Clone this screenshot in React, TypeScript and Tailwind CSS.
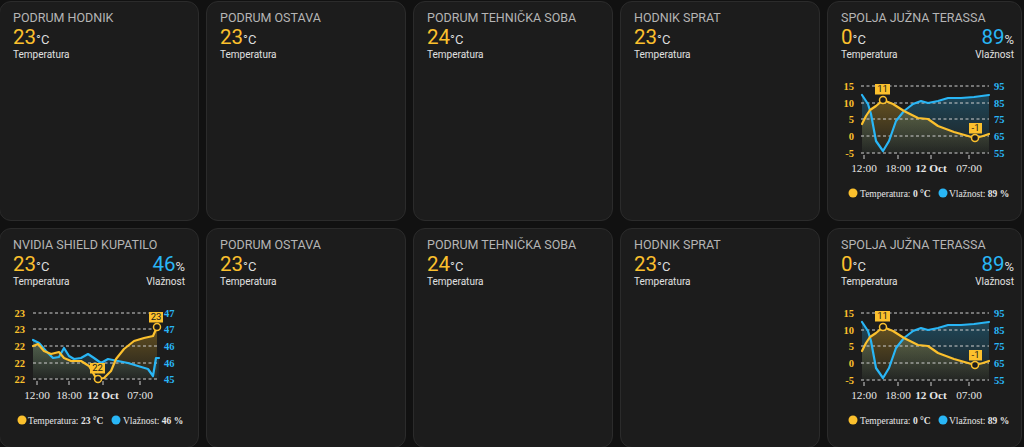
import React from "react";

type Pt = [number, number];

const YEL = "#fbc02d";
const BLU = "#29b6f6";

const line = (pts: Pt[]) => pts.map((p, i) => (i ? "L" : "M") + p[0] + " " + p[1]).join(" ");
const area = (pts: Pt[], bottom: number) =>
  line(pts) + ` L${pts[pts.length - 1][0]} ${bottom} L${pts[0][0]} ${bottom} Z`;

type Box = { x: number; y: number; w: number; text: string; mx: number; my: number };

type ChartProps = {
  id: string;
  w: number;
  gx1: number;
  gx2: number;
  gy: number[];
  leftX: number;
  rightX: number;
  left: string[];
  right: string[];
  ticks: number[];
  temp: Pt[];
  hum: Pt[];
  boxes: Box[];
  legend: { c1: number; t1: number; c2: number; t2: number; tv: string; hv: string };
};

function Chart(p: ChartProps) {
  const bottom = p.gy[p.gy.length - 1];
  const serif = "'Liberation Serif', 'Times New Roman', serif";
  return (
    <svg width={p.w} height={150} viewBox={`0 58 ${p.w} 150`} className="block">
      <defs>
        <linearGradient id={p.id + "t"} x1="0" y1="0" x2="0" y2="1">
          <stop offset="0%" stopColor={YEL} stopOpacity="0.32" />
          <stop offset="100%" stopColor={YEL} stopOpacity="0.03" />
        </linearGradient>
        <linearGradient id={p.id + "h"} x1="0" y1="0" x2="0" y2="1">
          <stop offset="0%" stopColor={BLU} stopOpacity="0.28" />
          <stop offset="100%" stopColor={BLU} stopOpacity="0.03" />
        </linearGradient>
      </defs>
      <path d={area(p.hum, bottom)} fill={`url(#${p.id}h)`} />
      <path d={area(p.temp, bottom)} fill={`url(#${p.id}t)`} />
      {p.gy.map((y, i) => (
        <line key={i} x1={p.gx1} x2={p.gx2} y1={y} y2={y} stroke="#cfcfcf" strokeWidth="1" strokeDasharray="3 2.5" />
      ))}
      {p.ticks.map((x, i) => (
        <line key={i} x1={x} x2={x} y1={bottom + 2} y2={bottom + 6} stroke="#cfcfcf" strokeWidth="1" />
      ))}
      {p.left.map((t, i) => (
        <text key={i} x={p.leftX} y={p.gy[i] + 3.5} textAnchor="end" fontFamily={serif} fontSize="10.5" fontWeight="bold" fill={YEL}>
          {t}
        </text>
      ))}
      {p.right.map((t, i) => (
        <text key={i} x={p.rightX} y={p.gy[i] + 3.5} fontFamily={serif} fontSize="10.5" fontWeight="bold" fill={BLU}>
          {t}
        </text>
      ))}
      <path d={line(p.hum)} fill="none" stroke={BLU} strokeWidth="2.2" strokeLinejoin="round" strokeLinecap="round" />
      <path d={line(p.temp)} fill="none" stroke={YEL} strokeWidth="2.2" strokeLinejoin="round" strokeLinecap="round" />
      {p.boxes.map((b, i) => (
        <g key={i}>
          <circle cx={b.mx} cy={b.my} r="3.5" fill="#1c1c1c" stroke={YEL} strokeWidth="1.5" />
          <rect x={b.x} y={b.y} width={b.w} height={10.5} fill={YEL} />
          <text x={b.x + b.w / 2} y={b.y + 8.3} textAnchor="middle" fontFamily="Roboto, 'Liberation Sans', sans-serif" fontSize="9.5" fill="#1a1a1a">
            {b.text}
          </text>
        </g>
      ))}
      {[
        ["12:00", false],
        ["18:00", false],
        ["12 Oct", true],
        ["07:00", false],
      ].map(([t, b], i) => (
        <text key={i} x={p.ticks[i]} y={170} textAnchor="middle" fontFamily={serif} fontSize="11.3" fontWeight={b ? "bold" : "normal"} fill="#e6e6e6">
          {t as string}
        </text>
      ))}
      <circle cx={p.legend.c1} cy={191} r="4.5" fill={YEL} />
      <text x={p.legend.t1} y={194.5} fontFamily={serif} fontSize="9.5" fill="#e6e6e6">
        Temperatura: <tspan fontWeight="bold">{p.legend.tv}</tspan>
      </text>
      <circle cx={p.legend.c2} cy={191} r="4.5" fill={BLU} />
      <text x={p.legend.t2} y={194.5} fontFamily={serif} fontSize="9.5" fill="#e6e6e6">
        Vlažnost: <tspan fontWeight="bold">{p.legend.hv}</tspan>
      </text>
    </svg>
  );
}

function Header({ title, temp, hum, pr = "pr-[13px]" }: { title: string; temp: string; hum?: string; pr?: string }) {
  return (
    <div className={`pt-[8px] pl-[13px] ${pr}`}>
      <div className="h-4 text-[12.5px] leading-4 text-[#b5b5b5] whitespace-nowrap">{title}</div>
      <div className="flex justify-between">
        <div>
          <div className="h-[22px] leading-[22px] whitespace-nowrap">
            <span className="text-[20.5px] text-[#fbc02d]">{temp}</span>
            <span className="text-[13px] text-[#dddddd]">°C</span>
          </div>
          <div className="h-[12px] leading-[13px] text-[10px] text-[#e0e0e0]">Temperatura</div>
        </div>
        {hum && (
          <div className="text-right">
            <div className="h-[22px] leading-[22px] whitespace-nowrap">
              <span className="text-[20.5px] text-[#29b6f6]">{hum}</span>
              <span className="text-[13px] text-[#dddddd]">%</span>
            </div>
            <div className="h-[12px] leading-[13px] text-[10px] text-[#e0e0e0]">Vlažnost</div>
          </div>
        )}
      </div>
    </div>
  );
}

function Card({ children }: { children: React.ReactNode }) {
  return (
    <div className="bg-[#1c1c1c] border border-[#2b2b2b] rounded-[12px] overflow-hidden">{children}</div>
  );
}

const terassaTemp: Pt[] = [
  [34, 122], [38, 114], [42, 108], [48, 104], [55, 98], [65, 102], [76, 109], [90, 116], [100, 117], [110, 124], [126, 130], [140, 134], [147, 136], [155, 134], [161, 132],
];
const terassaHum: Pt[] = [
  [34, 93], [40, 102], [43, 112], [48, 139], [55, 149], [61, 139], [68, 119], [76, 109], [85, 102], [93, 99], [100, 101], [110, 99], [120, 96], [133, 96], [146, 95], [161, 93],
];

function Terassa({ id }: { id: string }) {
  return (
    <Card>
      <Header title="SPOLJA JUŽNA TERASSA" temp="0" hum="89" pr="pr-[7px]" />
      <Chart
        id={id}
        w={195}
        gx1={33}
        gx2={161}
        gy={[84, 101, 117, 134, 151]}
        leftX={26}
        rightX={166}
        left={["15", "10", "5", "0", "-5"]}
        right={["95", "85", "75", "65", "55"]}
        ticks={[36, 70, 103, 141]}
        temp={terassaTemp}
        hum={terassaHum}
        boxes={[
          { x: 47, y: 82, w: 15, text: "11", mx: 55, my: 98 },
          { x: 141, y: 121, w: 13, text: "-1", mx: 147, my: 136 },
        ]}
        legend={{ c1: 25, t1: 32, c2: 115, t2: 121, tv: "0 °C", hv: "89 %" }}
      />
    </Card>
  );
}

const nvTemp: Pt[] = [
  [33, 117], [38, 115], [44, 122], [51, 125], [59, 123], [64, 129], [71, 132], [81, 132], [89, 137], [96, 149], [98, 150], [104, 149], [111, 142], [116, 130], [124, 120], [134, 112], [144, 109], [153, 107], [157, 98],
];
const nvHum: Pt[] = [
  [33, 111], [39, 114], [46, 122], [53, 129], [59, 128], [64, 119], [69, 127], [74, 130], [81, 129], [88, 125], [94, 129], [101, 134], [108, 130], [118, 132], [128, 134], [138, 137], [148, 140], [153, 147], [156, 129], [159, 129],
];

function Nvidia() {
  return (
    <Card>
      <Header title="NVIDIA SHIELD KUPATILO" temp="23" hum="46" />
      <Chart
        id="nv"
        w={198}
        gx1={33}
        gx2={158}
        gy={[84, 100, 117, 134, 150]}
        leftX={25}
        rightX={164}
        left={["23", "23", "22", "22", "22"]}
        right={["47", "47", "46", "46", "45"]}
        ticks={[37, 69, 103, 140]}
        temp={nvTemp}
        hum={nvHum}
        boxes={[
          { x: 149, y: 83, w: 14, text: "23", mx: 157, my: 98 },
          { x: 90, y: 134, w: 15, text: "22", mx: 98, my: 150 },
        ]}
        legend={{ c1: 22, t1: 28, c2: 116, t2: 123, tv: "23 °C", hv: "46 %" }}
      />
    </Card>
  );
}

function Simple({ title, temp }: { title: string; temp: string }) {
  return (
    <Card>
      <Header title={title} temp={temp} />
    </Card>
  );
}

export default function App() {
  return (
    <div
      className="w-[1024px] h-[447px] overflow-hidden bg-[#111111]"
      style={{ fontFamily: "Roboto, 'Liberation Sans', sans-serif" }}
    >
      <div className="grid grid-cols-[200px_200px_200px_200px_195px] grid-rows-[220px_220px] gap-x-[7px] gap-y-[7px] ml-[-1px] pt-px">
        <Simple title="PODRUM HODNIK" temp="23" />
        <Simple title="PODRUM OSTAVA" temp="23" />
        <Simple title="PODRUM TEHNIČKA SOBA" temp="24" />
        <Simple title="HODNIK SPRAT" temp="23" />
        <Terassa id="t1" />
        <Nvidia />
        <Simple title="PODRUM OSTAVA" temp="23" />
        <Simple title="PODRUM TEHNIČKA SOBA" temp="24" />
        <Simple title="HODNIK SPRAT" temp="23" />
        <Terassa id="t2" />
      </div>
    </div>
  );
}
